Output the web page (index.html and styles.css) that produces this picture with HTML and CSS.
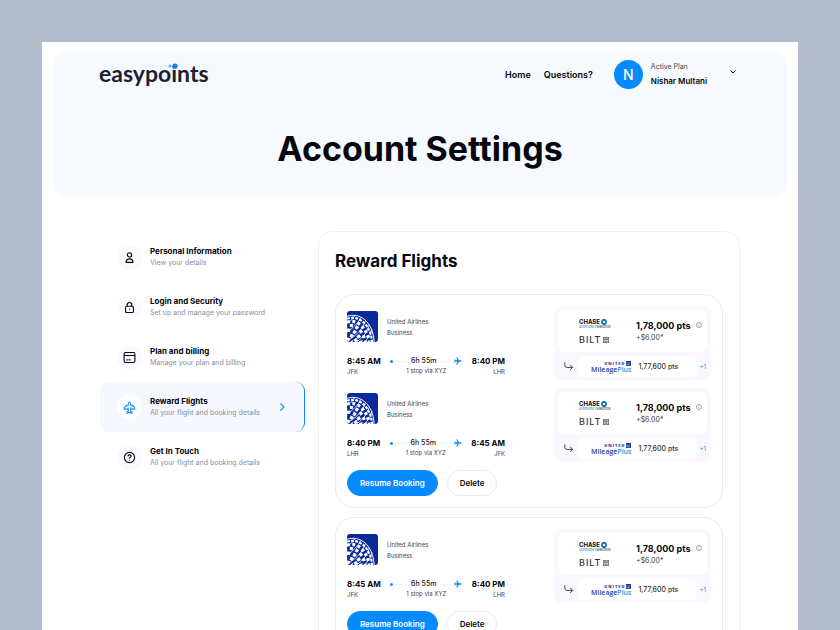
FILE: index.html
```
<!DOCTYPE html>
<html lang="en">
<head>
    <meta charset="UTF-8">
    <meta name="viewport" content="width=device-width, initial-scale=1.0">
    <title>Account Settings - easypoints</title>
    <link rel="stylesheet" href="styles.css">
</head>
<body>
    <!-- shared icons -->
    <svg class="sprite" aria-hidden="true">
        <symbol id="globe" viewBox="0 0 32 32">
            <rect width="32" height="32" fill="#0a2a9b"/>
            <g fill="none" stroke="#fff">
                <path stroke-width="1" d="M0 5.500C13 1 27 11 28 32"/>
                <path stroke-width="2.200" stroke-dasharray="3 1.300" d="M0 8C12 4 24 13 26 32"/>
                <path stroke-width="3.200" stroke-dasharray="3 2.600" d="M0 11.500C10 8 20 16 23 32"/>
                <path stroke-width="3.400" stroke-dasharray="3.200 2.800" stroke-dashoffset="3" d="M0 15.500C8 13 16 19 19 32"/>
                <path stroke-width="3.600" stroke-dasharray="3.400 3" d="M0 20C6 19 12 23 14.500 32"/>
                <path stroke-width="3.600" stroke-dasharray="3.400 3" stroke-dashoffset="3.200" d="M0 24.500C4 24 8 27 10 32"/>
                <path stroke-width="3.400" stroke-dasharray="3 2" d="M0 29C2 29 4 30 5 32"/>
                <path stroke-width=".8" d="M0 13Q6 9 8 5M0 22Q11 14 14 7M2 30Q16 21 19 10M10 32Q21 24 23 14M18 32Q25 26 26 19"/>
            </g>
        </symbol>
        <symbol id="plane" viewBox="0 0 24 24">
            <path fill="currentColor" d="M23 12c0-1.200-1.500-2-3-2h-5L9.500 1H7l2.500 9H4.500L2.500 7H.8L2 12 .8 17h1.700l2-3h5L7 23h2.500l5.500-9h5c1.500 0 3-.8 3-2z"/>
        </symbol>
        <symbol id="info" viewBox="0 0 12 12">
            <circle cx="6" cy="6" r="5" fill="none" stroke="currentColor" stroke-width="1.500"/>
            <path d="M6 5.400v3.200M6 3.200v1.100" stroke="currentColor" stroke-width="1.300"/>
        </symbol>
        <symbol id="turn" viewBox="0 0 12 12">
            <path fill="none" stroke="currentColor" d="M2 1.500v3q0 2.500 2.500 2.500H10.500M7.800 4.200 10.600 7 7.800 9.800"/>
        </symbol>
        <symbol id="chase" viewBox="0 0 12 12">
            <path fill="none" stroke="#0b6fc2" stroke-width="3.600" d="M4.200 2h3.600L10 4.200v3.600L7.800 10H4.200L2 7.800V4.200z"/>
            <path fill="none" stroke="#fff" stroke-width=".5" d="M7.500 3.500 9.800.5M8.500 7.500l3 2.300M4.500 8.500l-2.300 3M3.500 4.500l-3-2.300"/>
        </symbol>
        <symbol id="bilt" viewBox="0 0 12 12">
            <rect x=".7" y=".7" width="10.600" height="10.600" fill="#e4e4e4" stroke="#555" stroke-width="1.400"/>
            <path d="M3 3.500h4V6H3zM3 8.800h6M9 3v3" fill="none" stroke="#444" stroke-width="1.200"/>
        </symbol>
        <symbol id="tail" viewBox="0 0 12 12">
            <rect width="12" height="12" fill="#173a9e"/>
            <path d="M0 5Q6 1 9 11M0 9Q5 6 6 12M4 10Q9 6 9 2" fill="none" stroke="#c7d2f2"/>
        </symbol>
    </svg>

    <div class="page">
        <header class="hero">
            <div class="topbar">
                <a class="logo" href="#">easypoints
                    <svg class="logo-dots" viewBox="0 0 14 6" aria-hidden="true">
                        <circle cx="2" cy="3" r="1" fill="#b4d8fa"/>
                        <circle cx="6" cy="3" r="1.500" fill="#55aef7"/>
                        <circle cx="11" cy="3" r="2.600" fill="#0a84f5"/>
                    </svg>
                </a>
                <nav class="links">
                    <a href="#">Home</a>
                    <a href="#">Questions?</a>
                </nav>
                <button class="account" type="button">
                    <span class="avatar">N</span>
                    <span class="who">
                        <span class="plan">Active Plan</span>
                        <span class="user">Nishar Multani</span>
                    </span>
                    <svg class="caret" viewBox="0 0 8 8" aria-hidden="true"><path d="M1.500 2.500 4 5l2.500-2.500" fill="none" stroke="currentColor"/></svg>
                </button>
            </div>
            <h1>Account Settings</h1>
        </header>

        <div class="content">
            <nav class="menu">
                <a class="item" href="#">
                    <span class="icon"><svg viewBox="0 0 14 14"><circle cx="7" cy="4.200" r="2.300"/><path d="M3.300 12.200c-.6-5 8-5 7.400 0z"/></svg></span>
                    <span class="label"><b>Personal Information</b><small>View your details</small></span>
                </a>
                <a class="item" href="#">
                    <span class="icon"><svg viewBox="0 0 14 14"><rect x="2.800" y="5.600" width="8.400" height="6.800" rx="1.200"/><path d="M4.600 5.600V4q0-2.400 2.400-2.400T9.400 4v1.600M6.500 8.800h1"/></svg></span>
                    <span class="label"><b>Login and Security</b><small>Set up and manage your password</small></span>
                </a>
                <a class="item" href="#">
                    <span class="icon"><svg viewBox="0 0 14 14"><rect x="1.200" y="1.600" width="11.600" height="10.800" rx="1.500"/><path d="M1.200 4.800h11.600M3.500 9.500H5M6 9.500h2"/></svg></span>
                    <span class="label"><b>Plan and billing</b><small>Manage your plan and billing</small></span>
                </a>
                <a class="item active" href="#">
                    <span class="icon"><svg viewBox="0 0 14 14"><path d="M5.700 4.500V2.800Q7-.6 8.300 2.800v1.700l4.200 2v2.300H8.400l-.2 2 1.500 1v1.400L7 12.300l-2.700.9v-1.400l1.500-1-.2-2H1.500V6.500zM3.500 5.500V4M10.500 5.500V4M5.500 7v1.500M8.500 7v1.500"/></svg></span>
                    <span class="label"><b>Reward Flights</b><small>All your flight and booking details</small></span>
                    <svg class="arrow" viewBox="0 0 10 10"><path d="M3.500 1.500 7 5 3.500 8.500"/></svg>
                </a>
                <a class="item" href="#">
                    <span class="icon"><svg viewBox="0 0 14 14"><circle cx="7" cy="7" r="5.500"/><path d="M5.300 5.800Q5.400 4.200 7 4.200t1.700 1.500Q8.700 6.600 7 7.400v.8M7 9.300v1"/></svg></span>
                    <span class="label"><b>Get In Touch</b><small>All your flight and booking details</small></span>
                </a>
            </nav>

            <main class="panel">
                <h2>Reward Flights</h2>
                <div id="bookings"></div>
            </main>
        </div>
    </div>

    <script src="index.js"></script>
</body>
</html>
```
FILE: styles.css
```
* {
    box-sizing: border-box;
}

body {
    margin: 0;
    padding: 42px 42px 0;
    height: 100vh;
    overflow: hidden;
    background-color: #b4bccb;
    font-family: Inter, "Liberation Sans", sans-serif;
    color: #05060f;
}

a {
    color: inherit;
    text-decoration: none;
}

button {
    font-family: inherit;
    color: inherit;
    cursor: pointer;
}

.sprite {
    position: absolute;
    width: 0;
    height: 0;
}

.page {
    background-color: #fff;
    padding: 9px 11px 0;
    min-height: 100%;
}

/* header */
.hero {
    background-color: #f6f9fe;
    border-radius: 14px;
    padding: 7px 0 25px;
}

.topbar {
    display: flex;
    align-items: center;
    height: 32px;
    padding: 0 50px 0 46px;
}

.logo {
    position: relative;
    margin-right: auto;
    padding-bottom: 2px;
    font-family: Lato, sans-serif;
    font-weight: 700;
    font-size: 23px;
    line-height: 28px;
    color: #1c2233;
}

.logo-dots {
    position: absolute;
    top: 4px;
    right: 31px;
    width: 14px;
    height: 6px;
}

.links {
    display: flex;
    gap: 13px;
    font-size: 9px;
    font-weight: 600;
}

.account {
    display: flex;
    align-items: center;
    margin-left: 21px;
    padding: 0;
    border: 0;
    background: none;
    text-align: left;
}

.avatar {
    width: 29px;
    height: 29px;
    border-radius: 50%;
    background-color: #068bff;
    color: #fff;
    font-size: 14px;
    font-weight: 500;
    line-height: 29px;
    text-align: center;
}

.who {
    display: flex;
    flex-direction: column;
    margin: 0 22px 0 8px;
    line-height: 14px;
}

.plan {
    font-size: 7px;
    color: #444;
}

.user {
    font-size: 8px;
    font-weight: 600;
}

.caret {
    width: 8px;
    height: 8px;
    margin-bottom: 4px;
}

h1 {
    margin: 36px 0 0;
    font-size: 34px;
    line-height: 46px;
    text-align: center;
}

/* layout */
.content {
    display: grid;
    grid-template-columns: 205px 1fr;
    gap: 13px;
    padding: 34px 47px 0;
}

/* side menu */
.menu {
    padding-top: 1px;
}

.item {
    display: flex;
    align-items: center;
    height: 50px;
    padding: 0 17px;
    border-radius: 9px;
}

.item.active {
    background-color: #f5f8fe;
    border-right: 1px solid #1586f0;
}

.icon {
    display: flex;
    align-items: center;
    justify-content: center;
    width: 25px;
    height: 25px;
    border-radius: 50%;
    background-color: #f8fafe;
}

.icon svg,
.arrow {
    width: 13px;
    height: 13px;
    fill: none;
    stroke: currentColor;
    stroke-width: 1.2;
}

.active .icon {
    background-color: #fff;
    color: #1b8df5;
}

.active .arrow {
    width: 10px;
    height: 10px;
    margin-left: auto;
    color: #1b8df5;
}

.label {
    display: flex;
    flex-direction: column;
    margin-left: 8px;
    line-height: 12px;
}

.label b {
    font-size: 8px;
}

.label small {
    font-size: 7px;
    color: #8b8f9b;
}

/* bookings */
.panel {
    border: 1px solid #f0f0f2;
    border-radius: 14px;
    padding: 17px 16px;
}

h2 {
    margin: 0 0 21px;
    font-size: 17px;
    line-height: 24px;
}

.card {
    border: 1px solid #ececee;
    border-radius: 19px;
    padding: 11px;
    margin-bottom: 9px;
}

.flight {
    display: flex;
    justify-content: space-between;
    height: 74px;
    margin-bottom: 8px;
}

.trip {
    width: 158px;
    margin-top: 5px;
}

.airline {
    display: flex;
    align-items: center;
    gap: 9px;
    font-size: 6px;
    line-height: 11px;
    color: #444;
}

.airline svg {
    width: 31px;
    height: 31px;
    border-radius: 3px;
}

.route {
    display: flex;
    justify-content: space-between;
    margin-top: 14px;
}

.stop {
    display: flex;
    flex-direction: column;
    font-size: 6px;
    line-height: 10px;
    color: #444;
}

.stop b {
    font-size: 8px;
    line-height: 11px;
    color: #05060f;
}

.stop.to {
    text-align: right;
}

.via {
    width: 72px;
    font-size: 6px;
    line-height: 10px;
    text-align: center;
    color: #444;
}

.line {
    display: flex;
    align-items: center;
    gap: 3px;
    font-size: 7px;
    font-weight: 500;
    color: #222;
}

.line::before {
    content: "";
    width: 3px;
    height: 3px;
    border-radius: 50%;
    background-color: #148cf5;
}

.line span {
    display: flex;
    flex: 1;
    align-items: center;
    gap: 4px;
}

.line span::before,
.line span::after {
    content: "";
    flex: 1;
    height: 1px;
    background-color: #f0f2f5;
}

.line svg {
    width: 8px;
    height: 8px;
    color: #148cf5;
}

.points {
    width: 157px;
    height: 74px;
    padding: 4px;
    border-radius: 8px;
    background-color: #f7f9fe;
}

.bank {
    display: flex;
    align-items: center;
    height: 42px;
    padding: 0 5px 0 21px;
    border-radius: 7px;
    background-color: #fff;
}

.brands {
    width: 57px;
}

.brand {
    display: flex;
    align-items: center;
    gap: 1px;
}

.chase {
    font-size: 6px;
    font-weight: 700;
    line-height: 7px;
}

.brand svg {
    width: 6px;
    height: 6px;
}

.ultimate {
    font-size: 4px;
    line-height: 4px;
    font-style: italic;
    color: #333;
}

.ultimate i {
    color: #1578c8;
}

.bilt {
    margin-top: 6px;
    font-size: 9px;
    font-weight: 500;
    line-height: 9px;
    letter-spacing: 1px;
    color: #333;
}

.bilt svg {
    margin-left: 1px;
}

.amount {
    margin-right: auto;
    font-size: 7px;
    line-height: 11px;
    color: #444;
}

.amount b {
    display: block;
    font-size: 9px;
    line-height: 12px;
    color: #05060f;
}

.bank > svg {
    width: 6px;
    height: 6px;
    margin-bottom: 12px;
    color: #888;
}

.transfer {
    display: flex;
    align-items: center;
    height: 21px;
    margin-top: 4px;
    padding: 0 1px 0 5px;
}

.transfer > svg {
    width: 11px;
    height: 11px;
    margin-right: 4px;
    color: #333;
}

.miles {
    display: flex;
    align-items: center;
    gap: 7px;
    width: 119px;
    height: 21px;
    padding-left: 13px;
    border-radius: 5px;
    background-color: #fff;
    font-size: 7px;
    font-weight: 500;
    color: #333;
}

.united {
    display: flex;
    flex-direction: column;
    align-items: flex-end;
    font-family: "Open Sans", sans-serif;
    font-size: 7px;
    font-weight: 600;
    line-height: 7px;
    color: #2a3fa6;
}

.united .brand {
    font-size: 4px;
    font-weight: 800;
    line-height: 5px;
    letter-spacing: 1px;
}

.united .brand svg {
    width: 5px;
    height: 5px;
}

.united i {
    font-style: normal;
    color: #149bd7;
}

.more {
    margin-left: auto;
    font-size: 6px;
    color: #1b8df5;
}

.actions {
    display: flex;
    gap: 9px;
}

.btn {
    height: 26px;
    padding: 0 12px;
    border: 1px solid #ececee;
    border-radius: 13px;
    background-color: #fff;
    font-size: 8px;
    font-weight: 600;
}

.btn.primary {
    border-color: #068bff;
    background-color: #068bff;
    color: #fff;
}
```
FILE: index.js
```
const out = { dep: '8:45 AM', from: 'JFK', arr: '8:40 PM', to: 'LHR' };
const back = { dep: '8:40 PM', from: 'LHR', arr: '8:45 AM', to: 'JFK' };
const bookings = [[out, back], [out]];

function icon(name) {
    return `<svg aria-hidden="true"><use href="#${name}"/></svg>`;
}

function flight(f) {
    return `
        <div class="flight">
            <div class="trip">
                <div class="airline">${icon('globe')}<div>United Airlines<br>Business</div></div>
                <div class="route">
                    <div class="stop"><b>${f.dep}</b>${f.from}</div>
                    <div class="via"><div class="line"><span>6h 55m</span>${icon('plane')}</div>1 stop via XYZ</div>
                    <div class="stop to"><b>${f.arr}</b>${f.to}</div>
                </div>
            </div>
            <div class="points">
                <div class="bank">
                    <div class="brands">
                        <div class="brand chase">CHASE${icon('chase')}</div>
                        <div class="ultimate"><i>ultimate</i> rewards</div>
                        <div class="brand bilt">BILT${icon('bilt')}</div>
                    </div>
                    <div class="amount"><b>1,78,000 pts</b>+$6.00*</div>
                    ${icon('info')}
                </div>
                <div class="transfer">
                    ${icon('turn')}
                    <div class="miles">
                        <div class="united"><span class="brand">UNITED${icon('tail')}</span><span>Mileage<i>Plus</i></span></div>
                        1,77,600 pts
                    </div>
                    <a class="more" href="#">+1</a>
                </div>
            </div>
        </div>`;
}

document.getElementById('bookings').innerHTML = bookings.map(b => `
    <section class="card">
        ${b.map(flight).join('')}
        <div class="actions">
            <button class="btn primary" type="button">Resume Booking</button>
            <button class="btn" type="button">Delete</button>
        </div>
    </section>`).join('');
```
